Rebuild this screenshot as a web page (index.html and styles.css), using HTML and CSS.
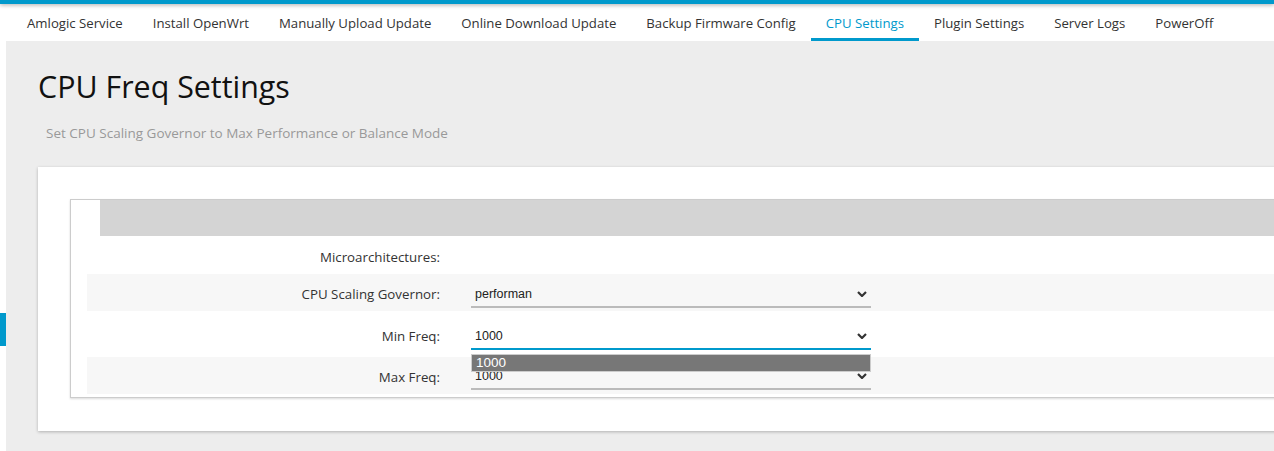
FILE: index.html
```html
<!DOCTYPE html>
<html>
<head>
<meta charset="utf-8">
<link rel="stylesheet" href="styles.css">
</head>
<body>
<div class="topbar"></div>
<nav class="tabs">
  <a class="tab">Amlogic Service</a>
  <a class="tab">Install OpenWrt</a>
  <a class="tab">Manually Upload Update</a>
  <a class="tab">Online Download Update</a>
  <a class="tab">Backup Firmware Config</a>
  <a class="tab active">CPU Settings</a>
  <a class="tab">Plugin Settings</a>
  <a class="tab">Server Logs</a>
  <a class="tab">PowerOff</a>
</nav>
<div class="layout">
  <aside class="side"><span class="side-mark"></span></aside>
  <main class="main">
    <h1 class="title">CPU Freq Settings</h1>
    <p class="desc">Set CPU Scaling Governor to Max Performance or Balance Mode</p>
    <section class="card">
      <div class="fieldset">
        <div class="head"></div>
        <div class="row r1">
          <div class="label">Microarchitectures:</div>
          <div class="value"></div>
        </div>
        <div class="row r2 odd">
          <div class="label">CPU Scaling Governor:</div>
          <div class="value">
            <div class="select"><span>performan</span><svg class="chev" viewBox="0 0 10 6" width="10" height="6"><path d="M1 1 L5 5 L9 1" fill="none" stroke="#333" stroke-width="2.2"/></svg></div>
          </div>
        </div>
        <div class="row r3">
          <div class="label">Min Freq:</div>
          <div class="value">
            <div class="select focus"><span>1000</span><svg class="chev" viewBox="0 0 10 6" width="10" height="6"><path d="M1 1 L5 5 L9 1" fill="none" stroke="#333" stroke-width="2.2"/></svg>
              <div class="popup">1000</div>
            </div>
          </div>
        </div>
        <div class="row r4 odd">
          <div class="label">Max Freq:</div>
          <div class="value">
            <div class="select"><span>1000</span><svg class="chev" viewBox="0 0 10 6" width="10" height="6"><path d="M1 1 L5 5 L9 1" fill="none" stroke="#333" stroke-width="2.2"/></svg></div>
          </div>
        </div>
      </div>
    </section>
  </main>
</div>
</body>
</html>
```
FILE: styles.css
```css
html, body {
  margin: 0;
  padding: 0;
  height: 100%;
  overflow: hidden;
  background: #fff;
  font-family: "Open Sans", "Noto Sans", sans-serif;
  color: #333;
}
.topbar {
  height: 4px;
  background: #0099cc;
  box-shadow: 0 1px 4px rgba(0,0,0,0.35);
  position: relative;
  z-index: 2;
}
.tabs {
  display: flex;
  height: 37px;
  padding-left: 12px;
  background: #fff;
}
.tab {
  display: flex;
  align-items: center;
  padding: 0 15px;
  font-size: 13.2px;
  color: #333;
  border-bottom: 3px solid transparent;
  box-sizing: border-box;
  height: 37px;
  padding-top: 4px;
  white-space: nowrap;
}
.tab.active {
  color: #0099cc;
  border-bottom-color: #0099cc;
}
.layout {
  display: flex;
  height: calc(100% - 41px);
}
.side {
  width: 6px;
  flex: none;
  background: #fff;
  padding-top: 272px;
}
.side-mark {
  display: block;
  width: 6px;
  height: 33px;
  background: #0099cc;
}
.main {
  flex: 1;
  background: #ededed;
  padding-left: 32px;
  overflow: hidden;
}
.title {
  margin: 28px 0 0 0;
  font-size: 30.4px;
  line-height: 36px;
  font-weight: 400;
  color: #111;
}
.desc {
  margin: 19px 0 0 8px;
  font-size: 13.5px;
  line-height: 18px;
  color: #999;
}
.card {
  margin-top: 25px;
  margin-right: -80px;
  background: #fff;
  box-shadow: 0 1px 3px rgba(0,0,0,0.25);
  padding: 32px 0 33px 32px;
}
.fieldset {
  border: 1px solid #ccc;
  border-right: none;
  box-shadow: 0 1px 2px rgba(0,0,0,0.15);
  padding: 0 0 3px 16px;
}
.head {
  height: 36px;
  margin-left: 13px;
  background: #d4d4d4;
}
.row {
  display: flex;
  align-items: center;
  font-size: 13.3px;
}
.row.odd { background: #f7f7f7; }
.r1 { height: 38px; }
.r2 { height: 37px; }
.r3 { height: 46px; }
.r4 { height: 37px; }
.label {
  width: 353px;
  text-align: right;
  color: #333;
  flex: none;
  padding-top: 3px;
}
.value {
  margin-left: 31px;
  flex: none;
}
.select {
  position: relative;
  width: 400px;
  height: 24px;
  box-sizing: border-box;
  border-bottom: 2px solid #bbb;
  display: flex;
  align-items: center;
  justify-content: space-between;
  padding: 0 4px 2px 4px;
  font-family: "Liberation Sans", Arial, sans-serif;
  font-size: 12.5px;
  color: #222;
}
.r2 .select { margin-top: 7px; }
.r3 .select { margin-top: 8px; }
.r4 .select { margin-top: 5px; }
.select.focus { border-bottom-color: #0099cc; }
.popup {
  position: absolute;
  left: 0;
  right: 0;
  top: calc(100% + 6px);
  height: 18px;
  box-sizing: border-box;
  background: #777;
  border: 1px solid #ccc;
  color: #fff;
  font-size: 13.5px;
  line-height: 16px;
  padding-left: 4px;
  z-index: 3;
}
```
